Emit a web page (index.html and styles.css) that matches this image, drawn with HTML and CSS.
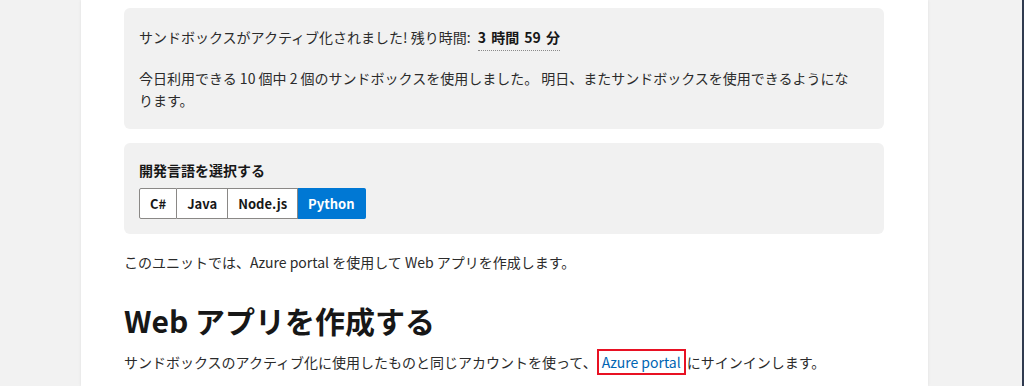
FILE: index.html
```html
<!DOCTYPE html>
<html lang="ja">
<head>
<meta charset="utf-8">
<link rel="stylesheet" href="styles.css">
</head>
<body>
<div class="page">
  <div class="gutter"></div>
  <main class="column">
    <section class="box sandbox">
      <p class="first">サンドボックスがアクティブ化されました! 残り時間: <span class="time">3 時間 59 分</span></p>
      <p>今日利用できる 10 個中 2 個のサンドボックスを使用しました。 明日、またサンドボックスを使用できるようになります。</p>
    </section>
    <section class="box langs">
      <div class="langs-title">開発言語を選択する</div>
      <div class="btn-group">
        <button class="btn">C#</button>
        <button class="btn">Java</button>
        <button class="btn">Node.js</button>
        <button class="btn active">Python</button>
      </div>
    </section>
    <p class="text">このユニットでは、Azure portal を使用して Web アプリを作成します。</p>
    <h1 class="heading">Web アプリを作成する</h1>
    <p class="text">サンドボックスのアクティブ化に使用したものと同じアカウントを使って、<a class="link" href="#">Azure portal</a>にサインインします。</p>
  </main>
  <div class="side"></div>
</div>
</body>
</html>
```
FILE: styles.css
```css
html, body {
  margin: 0;
  padding: 0;
  background: #f2f2f2;
  height: 100%;
  overflow: hidden;
}
body {
  font-family: "Noto Sans CJK JP", "Noto Sans", sans-serif;
  color: #2b2b2b;
  font-size: 14px;
  line-height: 22px;
}
.page {
  display: flex;
  height: 386px;
}
.gutter {
  width: 81px;
  flex: none;
}
.column {
  width: 847px;
  flex: none;
  background: #ffffff;
  box-shadow: 0 0 3px rgba(0, 0, 0, 0.08);
  padding: 8px 44px 0 43px;
  box-sizing: border-box;
}
.side {
  flex: 1;
  border-right: 2px solid #2f3a4f;
}
.box {
  background: #f1f1f1;
  border-radius: 6px;
  padding: 16px 15px;
}
.sandbox {
  padding: 18px 30px 18px 15px;
}
.sandbox p {
  margin: 0;
}
.sandbox p.first {
  margin-bottom: 19px;
}
.time {
  font-weight: bold;
  color: #171717;
  border-bottom: 1px dotted #8a8a8a;
  padding-bottom: 3px;
  margin-left: 4px;
  word-spacing: 2px;
}
.langs {
  margin-top: 14px;
  padding-top: 16px;
  padding-bottom: 15px;
}
.langs-title {
  font-weight: bold;
  color: #171717;
  margin-bottom: 7px;
}
.btn-group {
  display: inline-flex;
}
.btn {
  font-family: inherit;
  font-weight: bold;
  font-size: 13px;
  color: #171717;
  background: #ffffff;
  border: 1px solid #8a8886;
  border-left: none;
  height: 31px;
  padding: 0 10px;
  margin: 0;
  line-height: 29px;
}
.btn:first-child {
  border-left: 1px solid #8a8886;
  border-radius: 2px 0 0 2px;
}
.btn.active {
  background: #0078d4;
  border-color: #0078d4;
  color: #ffffff;
  border-radius: 0 2px 2px 0;
}
.text {
  margin: 17px 0 0;
}
.heading {
  font-size: 30px;
  line-height: 38px;
  font-weight: bold;
  color: #171717;
  margin: 28px 0 0;
}
.heading + .text {
  margin-top: 12px;
}
.link {
  color: #0065b3;
  text-decoration: none;
  outline: 2px solid #e81123;
  outline-offset: 1px;
  padding: 0 2px;
  margin: 0 4px 0 3px;
}
```
